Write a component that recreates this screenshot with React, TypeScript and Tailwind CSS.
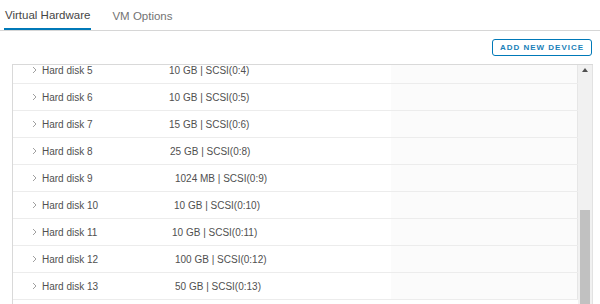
import React from "react";

interface DiskRow {
  name: string;
  value: string;
  offset: string;
}

const disks: DiskRow[] = [
  { name: "Hard disk 5", value: "10 GB | SCSI(0:4)", offset: "pl-[67px]" },
  { name: "Hard disk 6", value: "10 GB | SCSI(0:5)", offset: "pl-[67px]" },
  { name: "Hard disk 7", value: "15 GB | SCSI(0:6)", offset: "pl-[67px]" },
  { name: "Hard disk 8", value: "25 GB | SCSI(0:8)", offset: "pl-[68px]" },
  { name: "Hard disk 9", value: "1024 MB | SCSI(0:9)", offset: "pl-[73px]" },
  { name: "Hard disk 10", value: "10 GB | SCSI(0:10)", offset: "pl-[72px]" },
  { name: "Hard disk 11", value: "10 GB | SCSI(0:11)", offset: "pl-[70px]" },
  { name: "Hard disk 12", value: "100 GB | SCSI(0:12)", offset: "pl-[73px]" },
  { name: "Hard disk 13", value: "50 GB | SCSI(0:13)", offset: "pl-[73px]" },
];

function Chevron() {
  return (
    <svg width="5" height="8" viewBox="0 0 5 8" className="shrink-0">
      <path d="M1 1 L4 4 L1 7" fill="none" stroke="#a0a0a0" strokeWidth="1" />
    </svg>
  );
}

export default function App() {
  return (
    <div className="h-[304px] w-[600px] overflow-hidden bg-white font-['Liberation_Sans',Arial,sans-serif]">
      {/* tabs */}
      <div className="flex h-[31px] items-stretch border-b border-[#d6d6d6] pl-[4px]">
        <div className="flex h-[30px] items-center border-b-2 border-[#0079b8] px-[1px] pt-[4px] text-[11.5px] text-[#454545]">
          Virtual Hardware
        </div>
        <div className="ml-[21px] flex h-[30px] items-center pt-[4px] text-[11.5px] text-[#737373]">
          VM Options
        </div>
      </div>

      {/* toolbar */}
      <div className="flex justify-end pr-[8px] pt-[8px]">
        <button className="flex h-[17px] w-[100px] items-center justify-center rounded-[3px] border border-[#0079b8] text-[8px] font-bold tracking-[1px] text-[#1a7fb8]">
          ADD NEW DEVICE
        </button>
      </div>

      {/* device list */}
      <div className="ml-[12px] mt-[8px] flex h-[260px] w-[581px] border-l border-t border-[#d9d9d9]">
        <div className="h-full flex-1 overflow-hidden">
          <div className="-mt-[8px]">
            {disks.map((d) => (
              <div key={d.name} className="flex h-[27px] border-b border-[#ececec] text-[10px] text-[#505050]">
                <div className="flex w-[378px] items-center bg-white pl-[19px]">
                  <Chevron />
                  <span className="ml-[5px] w-[60px] shrink-0">{d.name}</span>
                  <span className={d.offset}>{d.value}</span>
                </div>
                <div className="flex-1 border-r border-[#e6e6e6] bg-[#fbfbfb]" />
              </div>
            ))}
          </div>
        </div>
        <div className="flex h-full w-[15px] flex-col border-r border-[#e2e2e2] bg-[#f1f1f1]">
          <div className="flex h-[8px] items-center justify-center pt-[1px]">
            <svg width="6" height="4" viewBox="0 0 6 4">
              <path d="M0 4 L3 0 L6 4 Z" fill="#505050" />
            </svg>
          </div>
          <div className="mx-[2px] mt-[137px] h-[110px] bg-[#c1c1c1]" />
        </div>
      </div>
    </div>
  );
}
